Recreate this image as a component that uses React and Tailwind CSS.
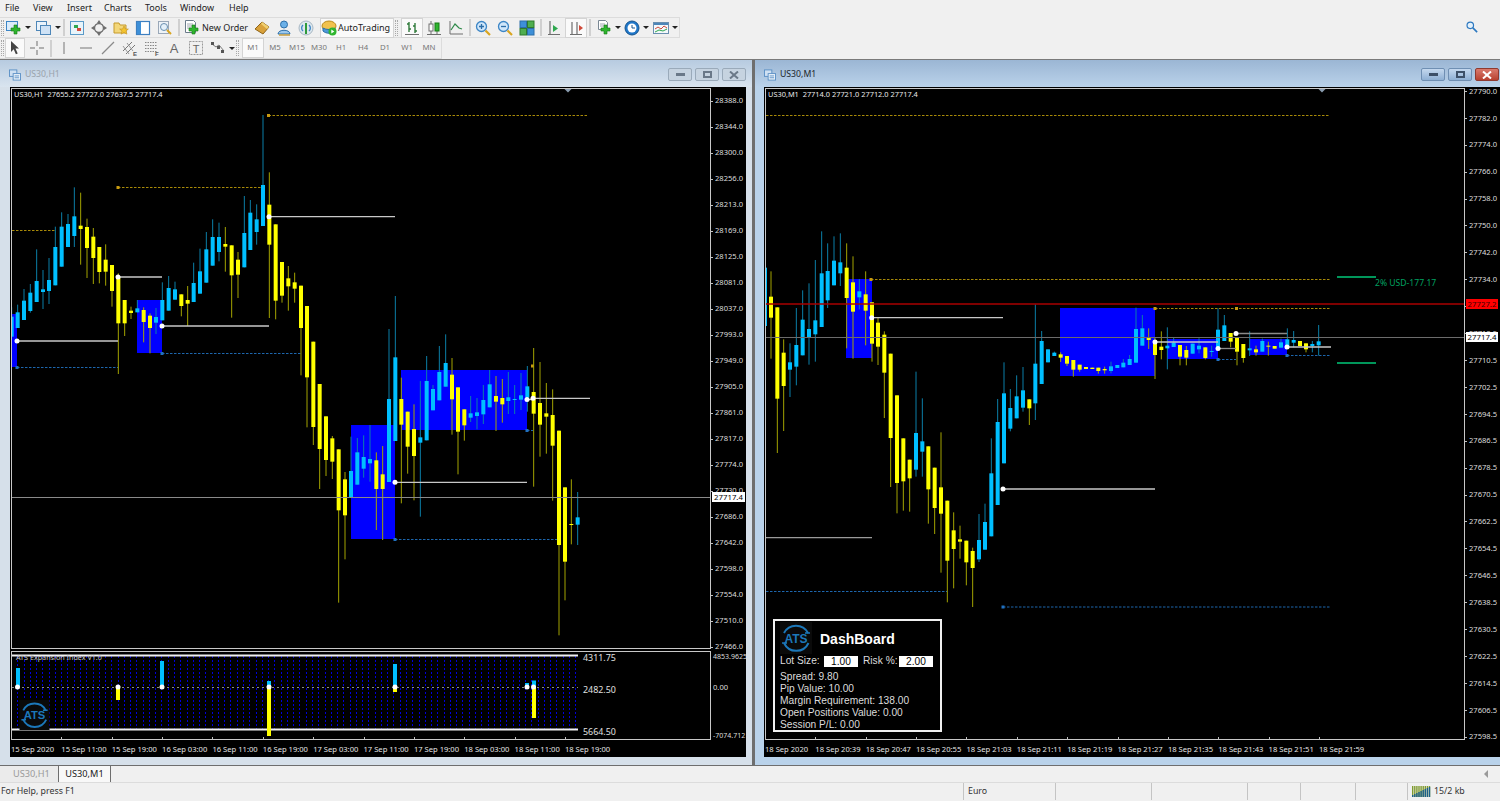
import React from "react";

// --- candle data, in zoomed px from a crop origin ---
const seg = (ox, oy, rows) =>
  rows.map(([c, z, t, b, wt, wb]) => ({
    up: c === "c",
    x: ox + z / 3,
    top: oy + t / 3,
    bot: oy + b / 3,
    wTop: oy + (wt ?? t) / 3,
    wBot: oy + (wb ?? b) / 3,
  }));

const H1_CANDLES = [
  ...seg(0, 100, [
    ["c", 35, 650, 710, 622, 710], ["c", 53, 637, 684, 614, 684], ["c", 72, 602, 660, 567, 660], ["c", 91, 578, 633, 552, 638],
    ["c", 110, 543, 606, 448, 606], ["c", 129, 568, 576, 510, 627], ["c", 147, 540, 573, 474, 612], ["c", 166, 441, 556, 380, 556],
    ["c", 185, 380, 500, 337, 500], ["c", 204, 372, 441, 342, 441], ["c", 223, 349, 408, 262, 441], ["y", 242, 377, 387, 278, 494],
    ["y", 261, 381, 444, 356, 534], ["y", 280, 410, 474, 384, 552], ["y", 298, 441, 516, 441, 550], ["y", 317, 479, 515, 433, 557],
    ["y", 336, 495, 573, 495, 620], ["y", 355, 531, 670, 520, 822], ["y", 374, 600, 670, 600, 708], ["y", 393, 632, 639, 620, 657],
    ["c", 412, 625, 637, 600, 637], ["y", 431, 630, 666, 622, 727], ["y", 450, 647, 684, 640, 760], ["c", 468, 651, 668, 624, 702],
    ["c", 487, 600, 661, 547, 661], ["c", 506, 564, 632, 528, 632], ["c", 525, 568, 599, 545, 599], ["y", 544, 583, 618, 583, 649],
    ["y", 563, 600, 611, 558, 678], ["c", 581, 549, 606, 488, 606], ["c", 600, 514, 581, 446, 581], ["c", 619, 448, 548, 396, 548],
    ["c", 638, 411, 497, 358, 497], ["c", 657, 411, 456, 368, 484], ["y", 676, 432, 440, 381, 515], ["y", 695, 436, 526, 436, 653],
    ["y", 714, 479, 524, 456, 594], ["c", 733, 399, 502, 288, 502], ["c", 751, 338, 450, 300, 450], ["c", 770, 358, 396, 313, 434],
    ["c", 789, 255, 378, 45, 378], ["y", 808, 314, 434, 217, 654], ["y", 827, 373, 602, 373, 658], ["y", 846, 486, 587, 486, 608],
    ["y", 865, 535, 559, 498, 632], ["y", 884, 547, 566, 518, 608], ["y", 903, 557, 684, 557, 826],
  ]),
  ...seg(295, 320, [
    ["y", 36, -42, 172, -42, 322], ["y", 55, 65, 321, 65, 375], ["y", 74, 192, 387, 192, 507], ["y", 93, 289, 420, 289, 468],
  ]),
  ...seg(330, 290, [
    ["y", 7, 445, 515, 438, 567], ["y", 26, 478, 661, 478, 938], ["y", 45, 568, 676, 546, 808],
    ["c", 63, 543, 623, 440, 623], ["c", 82, 487, 584, 444, 584], ["c", 101, 501, 536, 436, 563], ["c", 120, 507, 520, 405, 575],
    ["y", 139, 511, 597, 487, 720], ["y", 158, 553, 597, 468, 750], ["c", 177, 327, 576, 117, 576], ["c", 196, 202, 453, 18, 453],
    ["y", 214, 327, 404, 263, 640], ["y", 233, 365, 470, 365, 551], ["y", 252, 417, 498, 343, 631], ["c", 271, 442, 458, 273, 680],
    ["c", 290, 273, 451, 198, 451], ["c", 309, 297, 361, 285, 361], ["c", 328, 246, 331, 168, 331], ["c", 347, 219, 290, 133, 290],
    ["y", 366, 254, 328, 204, 434], ["y", 384, 292, 425, 292, 553], ["y", 403, 358, 406, 358, 452], ["c", 422, 370, 383, 318, 396],
    ["c", 441, 367, 378, 324, 418], ["c", 460, 330, 373, 285, 402], ["c", 479, 283, 352, 240, 352], ["y", 498, 318, 335, 258, 423],
    ["y", 517, 324, 343, 267, 398], ["c", 535, 322, 333, 246, 372], ["c", 554, 327, 329, 285, 372], ["c", 573, 316, 329, 249, 360],
    ["c", 592, 289, 323, 228, 365], ["y", 611, 306, 371, 174, 590], ["y", 630, 339, 404, 216, 500], ["y", 649, 370, 380, 279, 491],
    ["y", 668, 375, 467, 298, 632], ["y", 687, 422, 765, 422, 1036], ["y", 705, 592, 815, 592, 931], ["y", 724, 702, 704, 568, 763],
    ["c", 743, 682, 704, 606, 765],
  ]),
];

const M1_CANDLES = [
  ...seg(760, 220, [
    ["c", 15, 143, 318, 78, 318], ["y", 33, 230, 293, 154, 416], ["y", 52, 262, 536, 262, 699], ["y", 71, 398, 498, 358, 633],
    ["c", 90, 427, 449, 370, 531], ["c", 109, 375, 440, 264, 496], ["c", 128, 299, 406, 211, 406], ["c", 147, 327, 354, 190, 434],
    ["c", 166, 301, 343, 120, 425], ["c", 185, 160, 321, 34, 321], ["c", 203, 153, 241, 70, 264], ["c", 222, 122, 196, 49, 196],
    ["c", 241, 127, 160, 40, 198], ["y", 260, 143, 234, 70, 385], ["y", 279, 187, 275, 109, 416], ["c", 298, 214, 232, 177, 268],
    ["y", 317, 223, 272, 154, 376], ["y", 336, 247, 371, 247, 425], ["y", 354, 308, 380, 292, 435], ["y", 373, 344, 458, 334, 594],
    ["y", 392, 401, 654, 401, 801], ["y", 411, 526, 789, 526, 880], ["y", 430, 655, 784, 655, 872], ["y", 449, 719, 775, 719, 875],
    ["c", 468, 639, 749, 455, 770], ["c", 487, 664, 695, 535, 770], ["y", 505, 679, 808, 679, 911], ["y", 524, 743, 864, 743, 942],
    ["y", 543, 802, 881, 637, 1058], ["y", 562, 842, 1022, 842, 1147], ["y", 581, 931, 987, 877, 1105], ["y", 600, 958, 965, 917, 1016],
    ["y", 619, 962, 1027, 962, 1096], ["y", 638, 993, 1044, 983, 1161], ["c", 657, 960, 1018, 882, 1026], ["c", 675, 906, 989, 851, 989],
    ["c", 694, 760, 949, 655, 949], ["c", 713, 606, 855, 537, 855], ["c", 732, 520, 730, 427, 730], ["c", 751, 564, 626, 507, 634],
    ["c", 770, 529, 595, 466, 595], ["c", 789, 511, 563, 441, 575], ["y", 808, 538, 565, 538, 615], ["c", 826, 431, 550, 253, 600],
  ]),
  ...seg(1040, 260, [
    ["c", 5, 243, 372, 213, 372], ["c", 24, 268, 307], ["c", 43, 278, 288, 275, 288], ["y", 62, 283, 293, 277, 306],
    ["y", 81, 288, 311, 288, 318], ["y", 100, 300, 329, 300, 350], ["y", 119, 314, 329, 314, 335], ["y", 138, 321, 327],
    ["y", 157, 323, 327], ["y", 175, 323, 333, 323, 341], ["y", 194, 327, 331, 320, 341], ["c", 213, 319, 333, 305, 340],
    ["c", 232, 315, 324], ["c", 250, 308, 322, 297, 322], ["c", 269, 297, 315, 285, 315], ["c", 288, 207, 308, 143, 308],
    ["c", 307, 205, 257, 165, 257], ["y", 326, 232, 240, 205, 267], ["y", 345, 241, 285, 232, 357], ["y", 364, 260, 270, 214, 298],
    ["c", 382, 257, 265, 202, 328], ["c", 401, 248, 261, 234, 261], ["y", 420, 255, 290, 255, 316], ["y", 439, 270, 293, 258, 316],
    ["c", 458, 251, 281], ["c", 477, 257, 268, 235, 280], ["y", 496, 262, 294, 262, 298], ["c", 515, 273, 276, 257, 290],
    ["c", 534, 209, 265, 145, 265], ["c", 553, 196, 243, 165, 243], ["y", 572, 219, 245, 219, 262], ["y", 591, 231, 275, 231, 316],
    ["y", 610, 252, 294, 252, 308], ["c", 629, 265, 271, 214, 288], ["y", 648, 268, 277, 257, 287], ["c", 667, 243, 275, 236, 275],
    ["y", 685, 257, 260, 245, 287], ["y", 704, 258, 266], ["c", 723, 247, 263, 236, 263], ["c", 742, 238, 258, 205, 258],
    ["c", 761, 240, 248, 213, 262], ["y", 780, 243, 258], ["y", 798, 250, 268, 250, 277], ["c", 817, 252, 258, 243, 277],
    ["c", 836, 244, 256, 195, 287],
  ]),
];

const H1_PRICES = ["28388.0", "28344.0", "28300.0", "28256.0", "28213.0", "28169.0", "28125.0", "28081.0", "28037.0", "27993.0", "27949.0", "27905.0", "27861.0", "27817.0", "27774.0", "27730.0", "27686.0", "27642.0", "27598.0", "27554.0", "27510.0", "27466.0"];
const M1_PRICES = ["27790.0", "27782.0", "27774.0", "27766.0", "27758.0", "27750.0", "27742.0", "27734.0", "27726.0", "27718.5", "27710.5", "27702.5", "27694.5", "27686.5", "27678.5", "27670.5", "27662.5", "27654.5", "27646.5", "27638.5", "27630.5", "27622.5", "27614.5", "27606.5", "27598.5"];
const H1_TIMES = ["15 Sep 2020", "15 Sep 11:00", "15 Sep 19:00", "16 Sep 03:00", "16 Sep 11:00", "16 Sep 19:00", "17 Sep 03:00", "17 Sep 11:00", "17 Sep 19:00", "18 Sep 03:00", "18 Sep 11:00", "18 Sep 19:00"];
const M1_TIMES = ["18 Sep 2020", "18 Sep 20:39", "18 Sep 20:47", "18 Sep 20:55", "18 Sep 21:03", "18 Sep 21:11", "18 Sep 21:19", "18 Sep 21:27", "18 Sep 21:35", "18 Sep 21:43", "18 Sep 21:51", "18 Sep 21:59"];

const BLUE = "#0000ff";
const GOLD = "#a88a08";
const SKY = "#1d66ad";

const Candles = ({ data }) =>
  data.map((c, i) => (
    <g key={i}>
      <line x1={c.x} x2={c.x} y1={c.wTop} y2={c.wBot} stroke={c.up ? "#0b7fa8" : "#a3a300"} strokeWidth="1" />
      <rect x={c.x - 2} y={c.top} width="4" height={Math.max(c.bot - c.top, 1)} fill={c.up ? "#00bfff" : "#ffff00"} />
    </g>
  ));

const Level = ({ x1, x2, y, color = "#c8c8c8", dot = true }) => (
  <g>
    <line x1={x1} x2={x2} y1={y} y2={y} stroke={color} strokeWidth="1.3" />
    {dot && <circle cx={x1} cy={y} r="2.5" fill="#fff" />}
  </g>
);

const Dotted = ({ x1, x2, y, color, mark = true }) => (
  <g>
    <line x1={x1} x2={x2} y1={y + 0.5} y2={y + 0.5} stroke={color} strokeWidth="1" strokeDasharray="2.5 1.5" />
    {mark && <rect x={x1 - 1.5} y={y - 1} width="3" height="3" fill={color === GOLD ? "#c89a10" : "#2070c0"} />}
  </g>
);

const AtsLogo = ({ className }) => (
  <svg viewBox="0 0 32 32" className={className}>
    <rect width="32" height="32" fill="#0a0a0a" />
    <path d="M4 11A13.5 13.5 0 0 1 28 11M28.5 21A13.5 13.5 0 0 1 4 21" fill="none" stroke="#1c78ba" strokeWidth="2" />
    <path d="M2 21h5M25 11h5" stroke="#1c78ba" strokeWidth="1.5" />
    <text x="16" y="20.5" textAnchor="middle" fontSize="12" fontWeight="700" fontFamily="Liberation Sans, sans-serif" fill="#1c78ba">ATS</text>
  </svg>
);

const PriceAxis = ({ prices, rowClass, className = "" }) => (
  <div className={`flex flex-col ${className}`}>
    {prices.map((p) => (
      <div key={p} className={`flex items-center gap-[2px] ${rowClass}`}>
        <span className="w-[2px] h-px bg-[#c0c0c0]" />
        <span className="leading-none whitespace-nowrap">{p}</span>
      </div>
    ))}
  </div>
);

const TimeAxis = ({ times }) => (
  <div className="flex flex-1 text-[#e4e4e4]">
    {times.map((t) => (
      <div key={t} className="relative w-[50.37px] shrink-0">
        <span className="absolute left-0 -top-[3px] w-px h-[3px] bg-[#c0c0c0]" />
        <span className="block pt-[3px] leading-[12px] whitespace-nowrap">{t}</span>
      </div>
    ))}
  </div>
);

const H1Plot = () => (
  <svg viewBox="12 89 698 559" className="block w-[698px] h-[559px]">
    <rect x="12" y="314" width="5" height="53" fill={BLUE} />
    <rect x="137" y="300" width="25" height="53" fill={BLUE} />
    <rect x="351" y="425" width="44" height="114" fill={BLUE} />
    <rect x="401" y="370" width="126" height="60" fill={BLUE} />
    <Dotted x1={268.5} x2={588} y={115} color={GOLD} />
    <Dotted x1={118} x2={262} y={187} color={GOLD} />
    <Dotted x1={12} x2={56} y={230} color={GOLD} mark={false} />
    <rect x="531" y="364.5" width="3" height="3" fill="#c89a10" />
    <Dotted x1={17} x2={118} y={367} color={SKY} />
    <Dotted x1={162} x2={301} y={353} color={SKY} />
    <Dotted x1={395} x2={558} y={539} color={SKY} />
    <Dotted x1={527} x2={533} y={430} color={SKY} />
    <Candles data={H1_CANDLES} />
    <Level x1={17} x2={118} y={341} />
    <Level x1={118} x2={162} y={277} />
    <Level x1={162} x2={269} y={326} />
    <Level x1={269} x2={395} y={216.7} />
    <Level x1={395} x2={527} y={482.3} />
    <Level x1={527} x2={533} y={399.5} />
    <Level x1={533} x2={590} y={398.3} />
    <line x1="12" x2="710" y1="497.5" y2="497.5" stroke="#8a8a8a" />
    <path d="M564.5 89h7l-3.5 3.5z" fill="#8a9cb0" />
  </svg>
);

const M1Plot = () => (
  <svg viewBox="766 89 698 650" className="block w-[698px] h-[650px]">
    <rect x="846" y="279" width="26" height="79" fill={BLUE} />
    <rect x="1060" y="308" width="95" height="68" fill={BLUE} />
    <rect x="1167" y="339" width="51" height="20" fill={BLUE} />
    <rect x="1250" y="339" width="37" height="16" fill={BLUE} />
    <Dotted x1={766} x2={1330} y={115} color={GOLD} mark={false} />
    <Dotted x1={871} x2={1331} y={279} color={GOLD} />
    <Dotted x1={1155} x2={1331} y={308} color={GOLD} />
    <rect x="1235" y="307" width="3" height="3" fill="#c89a10" />
    <Dotted x1={766} x2={947} y={591} color={SKY} mark={false} />
    <Dotted x1={1003} x2={1331} y={606.5} color={SKY} />
    <Dotted x1={1218} x2={1236} y={359} color={SKY} />
    <Dotted x1={1287} x2={1331} y={355} color={SKY} />
    <Candles data={M1_CANDLES} />
    <line x1="766" x2="1464" y1="304" y2="304" stroke="#a80000" strokeWidth="1.5" />
    <line x1="766" x2="1464" y1="337.5" y2="337.5" stroke="#6c6c6c" />
    <Level x1={871.7} x2={1003} y={317.7} />
    <Level x1={1003} x2={1155} y={489} />
    <Level x1={766} x2={872} y={537.7} color="#9a9a9a" dot={false} />
    <Level x1={1155} x2={1218} y={342} />
    <Level x1={1218} x2={1236} y={348.5} color="#8a8a8a" />
    <Level x1={1236} x2={1287} y={333.5} color="#8a8a8a" />
    <Level x1={1287} x2={1331} y={347} />
    <line x1="1337" x2="1376" y1="277" y2="277" stroke="#00c878" strokeWidth="1.6" />
    <line x1="1337" x2="1376" y1="363" y2="363" stroke="#00c878" strokeWidth="1.6" />
    <path d="M1318.5 89h7l-3.5 3.5z" fill="#8a9cb0" />
  </svg>
);

const IndicatorPlot = () => (
  <svg viewBox="12 652 698 87" className="block w-[698px] h-[87px]">
    {Array.from({ length: 91 }, (_, i) => {
      const x = Math.round(11 + i * 6.27) + 0.5;
      return <line key={i} x1={x} x2={x} y1="656" y2="729" stroke="#0000d8" strokeDasharray="2 2" />;
    })}
    <line x1="12" x2="578" y1="687.5" y2="687.5" stroke="#8a8a8a" strokeDasharray="2 3" />
    <rect x="12" y="654.5" width="566" height="2" fill="#f0f0f0" />
    <rect x="12" y="728.5" width="566" height="2" fill="#f0f0f0" />
    <rect x="16" y="668" width="4" height="19" fill="#00bfff" />
    <rect x="116" y="687" width="4" height="13" fill="#ffff00" />
    <rect x="160" y="661" width="4" height="26" fill="#00bfff" />
    <rect x="267" y="681" width="4" height="6" fill="#00bfff" />
    <rect x="267" y="687" width="4" height="49" fill="#ffff00" />
    <rect x="393" y="664" width="4" height="23" fill="#00bfff" />
    <rect x="393" y="687" width="4" height="5" fill="#ffff00" />
    <rect x="525" y="683" width="4" height="4" fill="#00bfff" />
    <rect x="532" y="680.5" width="4" height="6.5" fill="#00bfff" />
    <rect x="532" y="687" width="4" height="31" fill="#ffff00" />
    {[17.5, 118, 162, 269, 395, 527, 533.5].map((x) => (
      <circle key={x} cx={x} cy="687" r="2.5" fill="#fff" />
    ))}
  </svg>
);

const Dashboard = () => (
  <div className="absolute left-[7px] bottom-[7px] w-[169px] h-[113px] border-2 border-[#f0f0f0] bg-black pl-[5px] pt-[1px] text-[#dcdcdc] font-['Liberation_Sans',sans-serif] text-[10.2px] leading-[12px] whitespace-nowrap">
    <div className="flex items-center gap-[8px] h-[32px]">
      <AtsLogo className="w-[32px] h-[32px]" />
      <span className="text-white font-bold text-[14px] pt-[2px]">DashBoard</span>
    </div>
    <div className="flex items-center h-[12px] mt-[1px]">
      <span className="w-[44px]">Lot Size:</span>
      <span className="w-[34px] bg-white text-black text-center leading-[11px]">1.00</span>
      <span className="ml-[5px] w-[36px]">Risk %:</span>
      <span className="w-[34px] bg-white text-black text-center leading-[11px]">2.00</span>
    </div>
    <div className="mt-[4px]">
      <div>Spread: 9.80</div>
      <div>Pip Value: 10.00</div>
      <div>Margin Requirement: 138.00</div>
      <div>Open Positions Value: 0.00</div>
      <div>Session P/L: 0.00</div>
    </div>
  </div>
);

const WinBtn = ({ danger, inactive, children }) => (
  <div
    className={`w-[24px] h-[13px] rounded-[2px] border flex items-center justify-center ${
      danger
        ? "bg-gradient-to-b from-[#d9796c] to-[#b8402f] border-[#8f3a30] text-white"
        : inactive
          ? "bg-[#c6d3e0] border-[#9aaaba] text-[#6a7888]"
          : "bg-gradient-to-b from-[#c4d8ee] to-[#8fb0d4] border-[#6f8fb3] text-[#3d5068]"
    }`}
  >
    {children}
  </div>
);

const WinIcon = () => (
  <svg viewBox="0 0 13 12" className="w-[12px] h-[12px]">
    <rect x="0.5" y="0.5" width="8" height="7" fill="#cfe0f2" stroke="#5a8fc5" />
    <rect x="4.5" y="4.5" width="8" height="7" fill="#eef5fb" stroke="#5a8fc5" />
    <path d="M6 7h5M6 9h5" stroke="#5a8fc5" />
  </svg>
);

const TitleBar = ({ title, active }) => (
  <div
    className={`h-[27px] flex items-center pt-[2px] pl-[9px] ${
      active ? "bg-gradient-to-b from-[#9bb6d4] to-[#bad2ea] pr-px" : "bg-gradient-to-b from-[#b7cbe0] to-[#d9e4ef] pr-[6px]"
    }`}
  >
    <WinIcon />
    <span className={`ml-[4px] text-[8.7px] ${active ? "text-[#20262c]" : "text-[#9aa3ac]"}`}>{title}</span>
    <div className="ml-auto flex gap-[3px]">
      <WinBtn inactive={!active}><span className="w-[9px] h-[3px] bg-current" /></WinBtn>
      <WinBtn inactive={!active}><span className="w-[9px] h-[7px] border-2 border-current" /></WinBtn>
      <WinBtn inactive={!active} danger={active}>
        <svg viewBox="0 0 10 8" className="w-[10px] h-[8px]"><path d="M1 0.5l8 7M9 0.5l-8 7" stroke="currentColor" strokeWidth="2" /></svg>
      </WinBtn>
    </div>
  </div>
);

const Info = ({ children }) => (
  <span className="absolute left-[2px] top-[0px] text-[7.4px] leading-[11px] text-[#e8e8e8] whitespace-nowrap">{children}</span>
);

const Flag = ({ className, children }) => (
  <span className={`absolute h-[10px] leading-[10px] text-[7.8px] text-center ${className}`}>{children}</span>
);

const LeftChart = () => (
  <div className="w-[752px] shrink-0 flex flex-col bg-[#d6e0ea]">
    <TitleBar title="US30,H1" />
    <div className="ml-[10px] mr-[6px] h-[670px] bg-black pl-px pt-px flex flex-col text-[7.6px] text-[#dcdcdc] overflow-hidden">
      <div className="flex h-[561px]">
        <div className="relative w-[700px] h-[561px] border border-[#c8c8c8]">
          <H1Plot />
          <Info>US30,H1&nbsp; 27655.2 27727.0 27637.5 27717.4</Info>
        </div>
        <PriceAxis prices={H1_PRICES} rowClass="h-[26px] shrink-0" />
      </div>
      <div className="relative flex mt-[2px] h-[89px]">
        <div className="relative w-[700px] h-[89px] border border-[#c8c8c8]">
          <IndicatorPlot />
          <span className="absolute left-[4px] top-[0px] text-[7.2px] leading-[11px] text-[#c8c8c8]">ATS Expansion Index V1.0</span>
          <AtsLogo className="absolute left-[7px] bottom-[9px] w-[31px] h-[30px]" />
          <span className="absolute left-[571px] top-[0px] text-[8.9px] leading-[11px] text-[#e0e0e0]">4311.75</span>
          <span className="absolute left-[571px] top-[32px] text-[8.9px] leading-[11px] text-[#e0e0e0]">2482.50</span>
          <span className="absolute left-[571px] top-[74px] text-[8.9px] leading-[11px] text-[#e0e0e0]">5664.50</span>
        </div>
        <span className="absolute left-[702px] top-[0px] text-[7px] leading-[11px] whitespace-nowrap">4853.9625</span>
        <span className="absolute left-[702px] top-[31px] leading-[11px]">0.00</span>
        <span className="absolute left-[702px] top-[79px] text-[7px] leading-[11px] whitespace-nowrap">-7074.712</span>
      </div>
      <TimeAxis times={H1_TIMES} />
    </div>
    <div className="flex-1" />
    <Flag className="left-[712px] top-[492px] w-[33px] bg-white text-black">27717.4</Flag>
  </div>
);

const RightChart = () => (
  <div className="flex-1 min-w-0 flex flex-col bg-[#b9d2ea]">
    <TitleBar title="US30,M1" active />
    <div className="ml-[9px] h-[670px] bg-black pl-px pt-px flex flex-col text-[7.6px] text-[#dcdcdc]">
      <div className="flex h-[652px]">
        <div className="relative w-[700px] h-[652px] border border-[#c8c8c8]">
          <M1Plot />
          <Info>US30,M1&nbsp; 27714.0 27721.0 27712.0 27717.4</Info>
          <span className="absolute left-[609px] top-[189px] text-[8.6px] leading-[11px] text-[#00a060] whitespace-nowrap">2% USD-177.17</span>
          <Dashboard />
        </div>
        <PriceAxis prices={M1_PRICES} rowClass="h-[26.92px] shrink-0" className="-mt-[10px]" />
      </div>
      <TimeAxis times={M1_TIMES} />
    </div>
    <div className="flex-1" />
    <Flag className="left-[1466px] top-[299px] w-[32px] bg-[#ff0000] text-[#400000]">27727.2</Flag>
    <Flag className="left-[1466px] top-[332px] w-[32px] bg-white text-black">27717.4</Flag>
  </div>
);

// --- toolbar icons ---
const Ic = ({ children, w = 16, h = 16 }) => (
  <svg viewBox={`0 0 ${w} ${h}`} width={w} height={h} className="shrink-0">{children}</svg>
);
const Plus = ({ x = 8, y = 8 }) => (
  <path d={`M${x + 3} ${y}h3v3h3v3h-3v3h-3v-3h-3v-3h3z`} fill="#2fb52f" stroke="#147a14" strokeWidth="0.6" />
);
const Glass = ({ sign }) => (
  <Ic>
    <circle cx="6.5" cy="6.5" r="5" fill="#cfe6fa" stroke="#3d86c6" strokeWidth="1.3" />
    <path d="M10.5 10.5l4.5 4.5" stroke="#d9a520" strokeWidth="2.2" />
    <path d={sign === "+" ? "M4 6.5h5M6.5 4v5" : "M4 6.5h5"} stroke="#2c6ea8" strokeWidth="1.3" />
  </Ic>
);
const Gray = "#6e6e6e";
const icons = {
  newChart: <Ic><rect x="0.5" y="1.5" width="11" height="9" fill="#dcecfa" stroke="#3d86c6" /><Plus x={5} y={5} /></Ic>,
  profiles: <Ic><rect x="0.5" y="1.5" width="10" height="9" fill="#eaf3fb" stroke="#4d86b8" /><rect x="4.5" y="5.5" width="10" height="9" fill="#cfe2f5" stroke="#4d86b8" /></Ic>,
  market: <Ic><rect x="1.5" y="1.5" width="13" height="13" fill="#e8f4fa" stroke="#5a9ac8" /><path d="M5 5h4v3H5z" fill="#2fa84f" /><path d="M8 8h4v3H8z" fill="#d84a3a" /></Ic>,
  navigator: <Ic><circle cx="8" cy="8" r="4.5" fill="none" stroke={Gray} strokeWidth="1.4" /><path d="M8 0l2 3H6zM8 16l2-3H6zM0 8l3-2v4zM16 8l-3-2v4z" fill={Gray} /></Ic>,
  folderStar: <Ic><path d="M1 3h5l1 2h6v8H1z" fill="#f3d77a" stroke="#c59a2c" /><path d="M11 6l1.4 3h3l-2.4 2 1 3.2L11 12.4 8 14.2l1-3.2L6.6 9h3z" fill="#f4c430" stroke="#b8871a" strokeWidth="0.5" /></Ic>,
  terminal: <Ic><rect x="1.5" y="1.5" width="13" height="13" fill="#fff" stroke="#3d7fc0" strokeWidth="1.2" /><rect x="2" y="2" width="4" height="12" fill="#3d8fd8" /></Ic>,
  tester: <Ic><rect x="1.5" y="1.5" width="10" height="12" fill="#eef3f8" stroke="#9aa8b8" /><circle cx="7" cy="7" r="3.5" fill="#e4f0fa" stroke="#6a8fb0" /><path d="M10 10l4 4" stroke="#d9a520" strokeWidth="2" /></Ic>,
  order: <Ic><path d="M1.5 0.5h8l2 2v10h-10z" fill="#fff" stroke="#6a7a8a" /><path d="M3 4h6M3 6h5M3 8h4" stroke="#a0a8b0" /><Plus x={5} y={5} /></Ic>,
  gold: <Ic><path d="M1 9l7-7 7 5-6 7z" fill="#d9a13a" stroke="#8f6418" /><path d="M8 2l7 5-2 2-6-5z" fill="#f0cf70" /></Ic>,
  people: <Ic><circle cx="8" cy="4.5" r="3.5" fill="#6bb0e8" stroke="#2c6ea8" /><path d="M2 14c0-5 12-5 12 0z" fill="#9cc8ec" stroke="#2c6ea8" /><path d="M3 15h11" stroke="#c9a24a" strokeWidth="1.6" /></Ic>,
  signal: <Ic><circle cx="8" cy="8" r="7" fill="#dde7ee" stroke="#a8b8c4" /><path d="M8 3v11" stroke="#2e9a3a" strokeWidth="2" /><path d="M5 5a4 4 0 0 0 0 6M11 5a4 4 0 0 1 0 6" stroke="#3d86c6" fill="none" strokeWidth="1.3" /></Ic>,
  auto: <Ic><ellipse cx="8" cy="6" rx="7" ry="5" fill="#f1c24e" stroke="#b98a1c" /><path d="M2 8c3 2 9 2 12 0v3c-3 3-9 3-12 0z" fill="#4d9ad8" stroke="#2c6ea8" /><circle cx="11.5" cy="11.5" r="4" fill="#2fb52f" /><path d="M10.3 9.5l3 2-3 2z" fill="#fff" /></Ic>,
  bars: <Ic><path d="M5 2v10M3 4h2M5 9h2M11 3v10M9 6h2M11 11h2" stroke="#2f7a3a" strokeWidth="1.4" /><path d="M1 14.5h14" stroke={Gray} /></Ic>,
  candles: <Ic><path d="M5 1v14M11 3v11" stroke={Gray} /><rect x="3" y="4" width="4" height="7" fill="#fff" stroke={Gray} /><rect x="9" y="3" width="4" height="8" fill="#2fb52f" stroke="#147a14" /><path d="M1 14.5h14" stroke={Gray} /></Ic>,
  line: <Ic><path d="M2 1v13h13" fill="none" stroke={Gray} /><path d="M3 10l4-6 4 4 3 1" fill="none" stroke="#2f8a4a" strokeWidth="1.2" /></Ic>,
  zoomIn: <Glass sign="+" />,
  zoomOut: <Glass sign="-" />,
  tile: <Ic><rect x="1" y="1" width="6.5" height="6.5" fill="#3d8fd8" stroke="#2c6ea8" /><rect x="8.5" y="1" width="6.5" height="6.5" fill="#4fae4f" stroke="#2e7a2e" /><rect x="1" y="8.5" width="6.5" height="6.5" fill="#4fae4f" stroke="#2e7a2e" /><rect x="8.5" y="8.5" width="6.5" height="6.5" fill="#3d8fd8" stroke="#2c6ea8" /></Ic>,
  shift: <Ic><path d="M4 1v13M2 14.5h12" stroke={Gray} strokeWidth="1.2" /><path d="M7 5l5 3.5-5 3.5z" fill="#2fa84f" /></Ic>,
  scroll: <Ic><path d="M4 2v12M9 2v12M2 14.5h12" stroke={Gray} strokeWidth="1.2" /><path d="M11 5l4 3-4 3z" fill="#d04a3a" /></Ic>,
  indicator: <Ic><path d="M2.5 0.5h7l2 2v7h-9z" fill="#fff" stroke="#7a8894" /><path d="M4 4h5M4 6h4" stroke="#a0a8b0" /><Plus x={5} y={5} /></Ic>,
  clock: <Ic><circle cx="8" cy="8" r="7" fill="#1f77c9" stroke="#16548e" /><circle cx="8" cy="8" r="4.5" fill="#fff" /><path d="M8 5v3h3" stroke="#16548e" fill="none" /></Ic>,
  template: <Ic><rect x="0.5" y="2.5" width="15" height="11" fill="#f4f8fb" stroke="#6a8fb0" /><rect x="1" y="3" width="14" height="2" fill="#4d86b8" /><path d="M2 9l3-2 3 2 3-3 3 2" stroke="#d04a3a" fill="none" /><path d="M2 12l4-2 4 1 4-2" stroke="#2fa84f" fill="none" /></Ic>,
  arrow: <Ic><path d="M4 1l8 7.5H8.5l2.2 5-1.8.8-2.2-5L4 12z" fill="#444" /></Ic>,
  cross: <Ic><path d="M8 1v5M8 10v5M1 8h5M10 8h5" stroke={Gray} /></Ic>,
  vline: <Ic><path d="M8 2v12" stroke="#8a8a8a" strokeWidth="1.2" /></Ic>,
  hline: <Ic><path d="M2 8h12" stroke="#8a8a8a" strokeWidth="1.2" /></Ic>,
  trend: <Ic><path d="M2 14L14 2" stroke="#8a8a8a" strokeWidth="1.2" /></Ic>,
  channel: <Ic><path d="M1 11l9-9M4 14l9-9" stroke="#777" /><path d="M1 6l6 8M5 3l6 8" stroke="#999" /><text x="11" y="15.5" fontSize="6" fontWeight="700" fill="#555" fontFamily="Liberation Sans, sans-serif">E</text></Ic>,
  fibo: <Ic><path d="M1 2.5h12M1 5.5h12M1 8.5h12M1 11.5h12" stroke="#888" strokeDasharray="1.5 1" /><text x="11" y="15.5" fontSize="6" fontWeight="700" fill="#555" fontFamily="Liberation Sans, sans-serif">F</text></Ic>,
  textA: <Ic><text x="8" y="13" textAnchor="middle" fontSize="13" fill="#666" fontFamily="Liberation Sans, sans-serif">A</text></Ic>,
  textT: <Ic><rect x="1.5" y="1.5" width="13" height="13" fill="none" stroke="#999" strokeDasharray="2 1" /><text x="8" y="12.5" textAnchor="middle" fontSize="11" fill="#666" fontFamily="Liberation Sans, sans-serif">T</text></Ic>,
  shapes: <Ic><path d="M2 4l4 3 3-2 5 6" stroke="#777" fill="none" /><rect x="1" y="2" width="3" height="3" fill="#555" /><rect x="7" y="6" width="3" height="3" fill="#555" /><rect x="11" y="10" width="3" height="3" fill="#555" /></Ic>,
};

const Caret = () => <span className="ml-[3px] w-0 h-0 shrink-0 border-x-[3px] border-x-transparent border-t-[3px] border-t-[#222]" />;
const Btn = ({ i, on, w = "w-[22px]" }) => (
  <div className={`h-[20px] shrink-0 flex items-center justify-center ${w} ${on ? "bg-[#fafafa] border border-[#d4d4d4]" : ""}`}>{icons[i]}</div>
);
const DropBtn = ({ i, w }) => (
  <div className={`h-[20px] shrink-0 flex items-center ${w}`}>{icons[i]}<Caret /></div>
);
const Sep = () => <span className="w-[2px] h-[17px] mx-[1.5px] shrink-0 bg-[#d0d0d0]" />;
const Grip = ({ className = "" }) => <span className={`w-[3px] h-[16px] mx-px shrink-0 border-x border-dotted border-[#a8a8a8] ${className}`} />;

const TF = ({ label, on }) => (
  <div className={`w-[22px] h-[20px] shrink-0 flex items-center justify-center text-[7.8px] text-[#777] ${on ? "bg-[#fafafa] border border-[#d4d4d4]" : ""}`}>{label}</div>
);

const Menu = () => (
  <div className="h-[16px] flex items-center pl-[5px] text-[9px] text-[#222]">
    {[["File", "w-[28px]"], ["View", "w-[34px]"], ["Insert", "w-[37px]"], ["Charts", "w-[41px]"], ["Tools", "w-[35px]"], ["Window", "w-[49px]"], ["Help", "w-[30px]"]].map(([m, w]) => (
      <span key={m} className={w}>{m}</span>
    ))}
  </div>
);

const TopToolbar = () => (
  <div className="h-[21px] w-[680px] flex items-center border-y border-r border-[#dcdcdc]">
    <Grip />
    <DropBtn i="newChart" w="w-[29px] pl-[1px]" />
    <DropBtn i="profiles" w="w-[27px] pl-[2px]" />
    <Sep />
    <Btn i="market" /><Btn i="navigator" /><Btn i="folderStar" /><Btn i="terminal" /><Btn i="tester" />
    <Sep />
    <div className="h-[20px] w-[70px] shrink-0 flex items-center pl-[3px] gap-[2px] text-[9px] text-[#222] whitespace-nowrap">{icons.order}New Order</div>
    <Btn i="gold" /><Btn i="people" /><Btn i="signal" />
    <div className="ml-[3px] w-[74px] h-[20px] shrink-0 flex items-center gap-px bg-[#fafafa] border border-[#d4d4d4] text-[9px] text-[#222] whitespace-nowrap">{icons.auto}AutoTrading</div>
    <Grip className="mr-[3px]" />
    <Btn i="bars" on /><Btn i="candles" /><Btn i="line" />
    <Sep />
    <Btn i="zoomIn" /><Btn i="zoomOut" /><Btn i="tile" />
    <Sep />
    <Btn i="shift" /><Btn i="scroll" on />
    <Sep />
    <DropBtn i="indicator" w="w-[30px] pl-[4px]" />
    <DropBtn i="clock" w="w-[29px] pl-[2px]" />
    <DropBtn i="template" w="w-[29px] pl-[2px]" />
    <svg viewBox="0 0 14 14" className="absolute right-[22px] top-[21px] w-[12px] h-[12px]">
      <circle cx="5" cy="5" r="3.8" fill="#e4f1fb" stroke="#2c78c0" strokeWidth="1.4" />
      <path d="M8 8l5 5" stroke="#2c78c0" strokeWidth="1.8" />
    </svg>
  </div>
);

const DrawToolbar = () => (
  <div className="h-[21px] w-[442px] flex items-center border-b border-r border-[#dcdcdc]">
    <Grip />
    <Btn i="arrow" on w="w-[20px]" />
    <div className="ml-px"><Btn i="cross" /></div>
    <Sep />
    <Btn i="vline" /><Btn i="hline" /><Btn i="trend" /><Btn i="channel" /><Btn i="fibo" /><Btn i="textA" /><Btn i="textT" />
    <DropBtn i="shapes" w="w-[28px] pl-[3px]" />
    <Grip className="mr-[3px]" />
    <TF label="M1" on /><TF label="M5" /><TF label="M15" /><TF label="M30" /><TF label="H1" /><TF label="H4" /><TF label="D1" /><TF label="W1" /><TF label="MN" />
  </div>
);

const Tabs = () => (
  <div className="relative h-[17px] flex border-t border-[#6e6e6e] bg-[#f0f0f0] text-[9.2px]">
    <div className="w-[58px] pl-[13px] leading-[15px] bg-[#ebebeb] text-[#9a9a9a] whitespace-nowrap">US30,H1</div>
    <div className="w-[53px] text-center leading-[15px] bg-[#f8f8f8] border-x border-[#6e6e6e] text-[#222] whitespace-nowrap">US30,M1</div>
    <span className="absolute right-[12px] top-[4px] w-0 h-0 border-y-[4px] border-y-transparent border-r-[4px] border-r-[#9a9a9a]" />
  </div>
);

const StatusCell = ({ w, children }) => (
  <div className={`h-full shrink-0 border-r border-[#c4c4c4] flex items-center ${w}`}>{children}</div>
);

const StatusBar = () => (
  <div className="h-[18px] flex border-t border-[#dcdcdc] text-[8.8px] text-[#333]">
    <StatusCell w="w-[964px] pl-[1px]">For Help, press F1</StatusCell>
    <StatusCell w="w-[92px] pl-[4px]">Euro</StatusCell>
    <StatusCell w="w-[96px]" />
    <StatusCell w="w-[96px]" />
    <StatusCell w="w-[53px]" />
    <StatusCell w="w-[55px]" />
    <StatusCell w="w-[52px]" />
    <div className="flex items-center pl-[4px] gap-[3px]">
      <svg viewBox="0 0 19 11" className="w-[19px] h-[11px]">
        {Array.from({ length: 9 }, (_, i) => (
          <g key={i}>
            <rect x={i * 2.1} y="0" width="1.4" height="11" fill="#7f9a2e" />
            <rect x={i * 2.1} y={9 - i} width="1.4" height={2 + i} fill="#1c5f8a" />
          </g>
        ))}
      </svg>
      <span>15/2 kb</span>
    </div>
  </div>
);

const App = () => {
  return (
    <div className="relative w-[1500px] h-[801px] overflow-hidden flex flex-col bg-[#f0f0f0] font-['Noto_Sans',sans-serif]">
      <Menu />
      <div className="h-px" />
      <TopToolbar />
      <DrawToolbar />
      <div className="h-px bg-[#7a7a7a]" />
      <div className="flex h-[705px]">
        <LeftChart />
        <div className="w-[3px] shrink-0 bg-[#6e6e6e]" />
        <RightChart />
      </div>
      <Tabs />
      <StatusBar />
    </div>
  );
};

export default App;
